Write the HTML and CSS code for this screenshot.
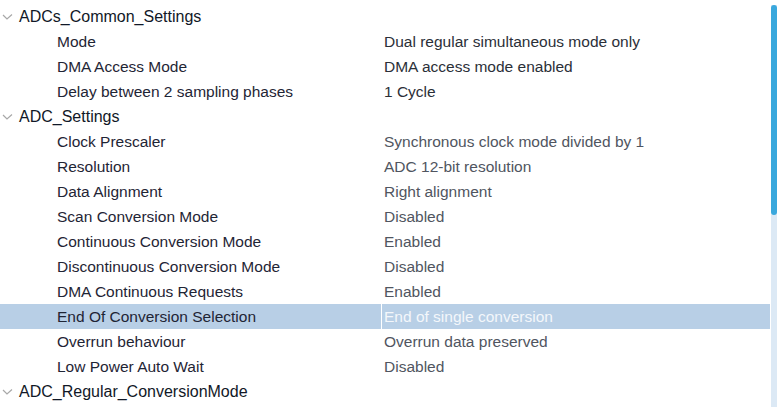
FILE: index.html
```html
<!DOCTYPE html>
<html>
<head>
<meta charset="utf-8">
<link rel="stylesheet" href="styles.css">
</head>
<body>
<div class="view">
  <div class="tree">
    <div class="row group"><span class="label"><svg class="chev" width="12" height="8" viewBox="0 0 12 8"><polyline points="1,2 5,6 10,1.5" fill="none" stroke="#a8a8a8" stroke-width="1.2"/></svg>ADCs_Common_Settings</span><span class="value"></span></div>
    <div class="row"><span class="label">Mode</span><span class="value dark">Dual regular simultaneous mode only</span></div>
    <div class="row"><span class="label">DMA Access Mode</span><span class="value dark">DMA access mode enabled</span></div>
    <div class="row"><span class="label">Delay between 2 sampling phases</span><span class="value dark">1 Cycle</span></div>
    <div class="row group"><span class="label"><svg class="chev" width="12" height="8" viewBox="0 0 12 8"><polyline points="1,2 5,6 10,1.5" fill="none" stroke="#a8a8a8" stroke-width="1.2"/></svg>ADC_Settings</span><span class="value"></span></div>
    <div class="row"><span class="label">Clock Prescaler</span><span class="value">Synchronous clock mode divided by 1</span></div>
    <div class="row"><span class="label">Resolution</span><span class="value">ADC 12-bit resolution</span></div>
    <div class="row"><span class="label">Data Alignment</span><span class="value">Right alignment</span></div>
    <div class="row"><span class="label">Scan Conversion Mode</span><span class="value">Disabled</span></div>
    <div class="row"><span class="label">Continuous Conversion Mode</span><span class="value">Enabled</span></div>
    <div class="row"><span class="label">Discontinuous Conversion Mode</span><span class="value">Disabled</span></div>
    <div class="row"><span class="label">DMA Continuous Requests</span><span class="value">Enabled</span></div>
    <div class="row selected"><span class="label">End Of Conversion Selection</span><span class="value">End of single conversion</span></div>
    <div class="row"><span class="label">Overrun behaviour</span><span class="value">Overrun data preserved</span></div>
    <div class="row"><span class="label">Low Power Auto Wait</span><span class="value">Disabled</span></div>
    <div class="row group"><span class="label"><svg class="chev" width="12" height="8" viewBox="0 0 12 8"><polyline points="1,2 5,6 10,1.5" fill="none" stroke="#a8a8a8" stroke-width="1.2"/></svg>ADC_Regular_ConversionMode</span><span class="value"></span></div>
  </div>
  <div class="scrollbar"><div class="thumb"></div></div>
</div>
</body>
</html>
```
FILE: styles.css
```css
html, body {
  margin: 0;
  padding: 0;
  background: #ffffff;
  overflow: hidden;
}
body {
  width: 777px;
  height: 407px;
  font-family: "Liberation Sans", Arial, sans-serif;
  font-size: 15.5px;
}
.view {
  display: flex;
  height: 407px;
  gap: 1px;
}
.tree {
  width: 770px;
  padding-top: 4px;
  display: flex;
  flex-direction: column;
}
.row {
  display: grid;
  grid-template-columns: 381px 1fr;
  height: 25px;
  line-height: 25px;
  white-space: nowrap;
}
.label {
  padding-left: 57px;
  color: #1f2535;
  display: flex;
  align-items: center;
}
.group .label {
  padding-left: 2px;
  color: #111827;
  font-size: 16px;
}
.chev {
  margin-right: 5px;
  margin-top: 1px;
}
.value {
  border-left: 1px solid transparent;
  padding-left: 2px;
  color: #505560;
}
.value.dark {
  color: #2b2f38;
}
.selected {
  background: #b8cfe6;
}
.selected .value {
  border-left-color: #ffffff;
  color: #f4f7fb;
}
.scrollbar {
  width: 6px;
  margin-top: 5px;
  background: #dce9f5;
}
.thumb {
  height: 210px;
  background: #3aa8dd;
  border-radius: 3px;
}
```
